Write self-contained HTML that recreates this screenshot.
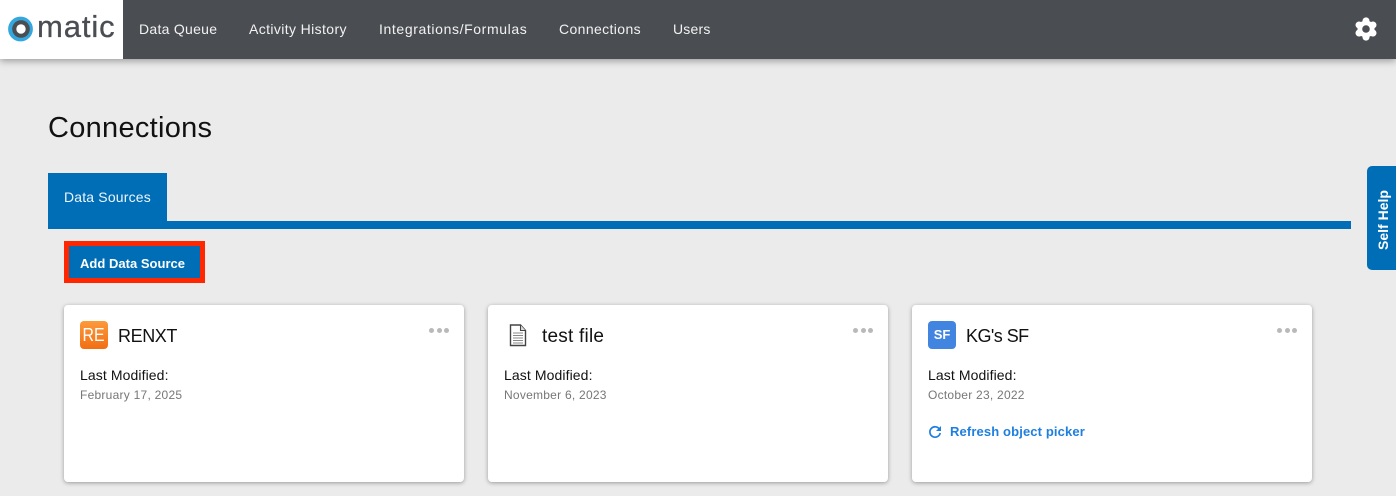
<!DOCTYPE html>
<html>
<head>
<meta charset="utf-8">
<style>
html,body{margin:0;padding:0}
body{width:1396px;height:496px;position:relative;overflow:hidden;background:#ebebeb;font-family:"Liberation Sans",sans-serif;color:#111}
.a{position:absolute;white-space:nowrap}
#top{left:0;top:0;width:1396px;height:59px;background:#4a4d52;box-shadow:0 2px 7px rgba(0,0,0,.35)}
#logo{left:0;top:0;width:123px;height:59px;background:#fff}
.nav{top:20px;font-size:14px;line-height:18px;color:#f2f2f2;letter-spacing:.38px}
.card{top:305px;width:400px;height:177px;background:#fff;border-radius:4px;box-shadow:0 1px 4px rgba(0,0,0,.35)}
.title{left:54px;top:20px;font-size:18px;line-height:22px;color:#111}
.lm{left:16px;top:61px;font-size:14px;line-height:18px;color:#111;letter-spacing:.1px}
.date{left:16px;top:82px;font-size:12px;line-height:16px;color:#777;letter-spacing:.25px}
.dots{right:14px;top:22px;width:21px;height:6px}
.dots i{position:absolute;top:.5px;width:5.4px;height:5.4px;border-radius:50%;background:#b9b9b9}
.ic{left:16px;top:16px;width:28px;height:28px;border-radius:4px;color:#fff;text-align:center}
</style>
</head>
<body>
<div class="a" id="top"></div>
<div class="a" id="logo">
<svg class="a" style="left:7px;top:16px" width="28" height="26" viewBox="0 0 28 26"><circle cx="13.5" cy="13" r="12.4" fill="#33a7de"/><circle cx="14" cy="13" r="8.8" fill="#4a4d52"/><circle cx="14" cy="13" r="4.7" fill="#fff"/></svg>
<div class="a" style="left:37px;top:9px;font-size:31px;line-height:36px;color:#4a4d52;letter-spacing:.9px;-webkit-text-stroke:.3px #4a4d52">matic</div>
</div>
<div class="a nav" style="left:139px;letter-spacing:.28px">Data Queue</div>
<div class="a nav" style="left:249px">Activity History</div>
<div class="a nav" style="left:379px;letter-spacing:.62px">Integrations/Formulas</div>
<div class="a nav" style="left:559px">Connections</div>
<div class="a nav" style="left:673px;letter-spacing:.2px">Users</div>
<svg class="a" style="left:1354px;top:17px" width="24" height="24" viewBox="0 0 24 24">
<g stroke="#fff" stroke-width="7" stroke-linecap="round"><line x1="12" y1="3.9" x2="12" y2="20.1"/><line x1="5" y1="7.95" x2="19" y2="16.05"/><line x1="5" y1="16.05" x2="19" y2="7.95"/></g>
<circle cx="12" cy="12" r="8.5" fill="#fff"/><circle cx="12" cy="12" r="3.8" fill="#4a4d52"/>
</svg>

<div class="a" style="left:48px;top:112px;font-size:29px;line-height:32px;color:#111;letter-spacing:.28px">Connections</div>

<div class="a" style="left:48px;top:173px;width:119px;height:48px;background:#006eb6"></div>
<div class="a" style="left:64px;top:188px;font-size:14px;line-height:18px;color:#eef5fb;letter-spacing:.17px">Data Sources</div>
<div class="a" style="left:48px;top:221px;width:1303px;height:8px;background:#006eb6"></div>

<div class="a" style="left:64px;top:241px;width:130.5px;height:32px;border:5px solid #ff2600;background:#006eb6"></div>
<div class="a" style="left:80px;top:255px;font-size:13px;line-height:18px;font-weight:bold;color:#fff;letter-spacing:.02px">Add Data Source</div>

<div class="a card" style="left:64px">
<div class="a ic" style="background:linear-gradient(#fb9a3c,#f26f13);font-size:18px;line-height:28px"><span style="display:inline-block;transform:scaleX(.88)">RE</span></div>
<div class="a title" style="letter-spacing:-.4px">RENXT</div>
<div class="a lm">Last Modified:</div>
<div class="a date">February 17, 2025</div>
<div class="a dots"><i style="left:0"></i><i style="left:7.5px"></i><i style="left:15px"></i></div>
</div>

<div class="a card" style="left:488px">
<svg class="a" style="left:20.5px;top:19px" width="18" height="23" viewBox="0 0 18 23"><path d="M1.5 1h10l5 5.5V21.5H1.5z" fill="#fff" stroke="#444" stroke-width="1.4"/><path d="M11.5 1v5.5h5" fill="#ddd" stroke="#444" stroke-width="1.1"/><path d="M4 9h10M4 11.5h10M4 14h10M4 16.5h10M4 19h10" stroke="#888" stroke-width="1"/></svg>
<div class="a title" style="top:21px;font-size:19px;letter-spacing:.22px">test file</div>
<div class="a lm">Last Modified:</div>
<div class="a date">November 6, 2023</div>
<div class="a dots"><i style="left:0"></i><i style="left:7.5px"></i><i style="left:15px"></i></div>
</div>

<div class="a card" style="left:912px">
<div class="a ic" style="background:#4285e0;font-size:13px;line-height:27px;font-weight:bold">SF</div>
<div class="a title" style="letter-spacing:-.55px">KG's SF</div>
<div class="a lm">Last Modified:</div>
<div class="a date">October 23, 2022</div>
<svg class="a" style="left:16px;top:120px" width="14" height="14" viewBox="0 0 14 14"><path d="M11.5 4.2A5.2 5.2 0 1 0 12.2 8" fill="none" stroke="#1e7fe0" stroke-width="1.7"/><path d="M13 1v5H8z" fill="#1e7fe0"/></svg>
<div class="a" style="left:38px;top:118px;font-size:13px;line-height:18px;font-weight:bold;color:#1e7fe0;letter-spacing:.13px">Refresh object picker</div>
<div class="a dots"><i style="left:0"></i><i style="left:7.5px"></i><i style="left:15px"></i></div>
</div>

<div class="a" style="left:1367px;top:166px;width:29px;height:104px;background:#006eb6;border-radius:5px 0 0 5px"></div>
<div class="a" style="left:1343px;top:211px;width:80px;height:18px;line-height:18px;font-size:14px;font-weight:bold;color:#fff;text-align:center;transform:rotate(-90deg)">Self Help</div>
</body>
</html>
